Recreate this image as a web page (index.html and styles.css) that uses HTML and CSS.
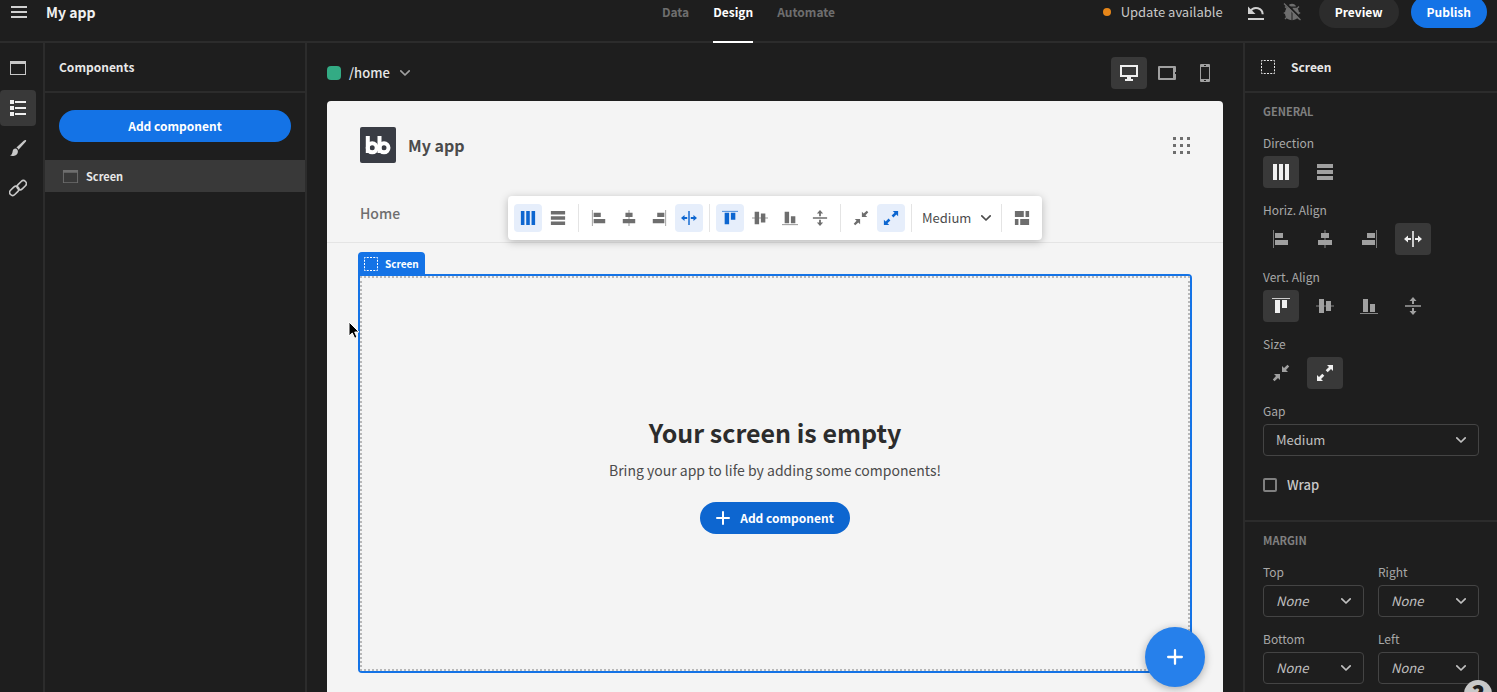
FILE: index.html
```html
<!DOCTYPE html>
<html lang="en">
<head>
    <meta charset="UTF-8">
    <meta name="viewport" content="width=device-width, initial-scale=1.0">
    <title>My app</title>
    <link rel="stylesheet" href="styles.css">
</head>
<body>
    <!-- icon sprite -->
    <svg class="sprite" aria-hidden="true">
        <symbol id="i-menu" viewBox="0 0 18 18"><path d="M1 3h16v2H1zM1 8h16v2H1zM1 13h16v2H1z"/></symbol>
        <symbol id="i-window" viewBox="0 0 18 18"><path d="M1 2h16v14H1zM2 5v10h14V5z" fill-rule="evenodd"/></symbol>
        <symbol id="i-list" viewBox="0 0 18 18"><path d="M1 1h4v4H1zM1 7h4v4H1zM1 13h4v4H1zM6 2h11v2H6zM6 8h11v2H6zM6 14h11v2H6z"/></symbol>
        <symbol id="i-brush" viewBox="0 0 18 18"><path d="M17 1.200c-.5-.5-1.200-.3-2 .3L7.400 8.600c.9.4 1.700 1.200 2.100 2.100l7-7.800c.7-.8.9-1.300.5-1.700zM6.600 9.500c-1.800 0-2.800 1.200-3 2.900-.2 1.900-.9 3.400-2.600 4.200 2.600.8 7.700.5 7.900-4.200-.1-1.500-.9-2.600-2.300-2.900z"/></symbol>
        <symbol id="i-link" viewBox="0 0 18 18"><g fill="none" stroke="currentColor" stroke-width="1.600"><rect x="7.500" y="3.200" width="10.500" height="6" rx="3" transform="rotate(-45 12.700 6.200)"/><rect x="0" y="8.800" width="10.500" height="6" rx="3" transform="rotate(-45 5.300 11.800)"/></g></symbol>
        <symbol id="i-undo" viewBox="0 0 18 18"><path d="M1 15h16v2H1z"/><path d="M3 8.500c2-3 5-4 8-3.200 2.800.8 4.500 3 4.700 5.900" fill="none" stroke="currentColor" stroke-width="2"/><path d="M1 3.500V11h7.500z"/></symbol>
        <symbol id="i-bug" viewBox="0 0 18 18"><path d="M5 3.600C5.500 1.800 7 .8 9 .8s3.500 1 4 2.800zM8.500 4.800v12.400C.5 16.800 1 7.500 4 4.800zM9.500 4.800v12.400c8-.4 7.500-9.700 4.500-12.400z"/><path d="M2 3.500l2 2M16 3.500l-2 2M.8 10h3M17.200 10h-3M2 16l2-2M16 16l-2-2" fill="none" stroke="currentColor" stroke-width="1.300"/><path d="M2.500 0L18 15.500" stroke="#1e1e1e" stroke-width="2"/><path d="M1 .5l16.500 16.500" stroke="currentColor" stroke-width="1.300"/></symbol>
        <symbol id="i-chevron" viewBox="0 0 10 10"><path d="M.8 2.800L5 7l4.200-4.200" fill="none" stroke="currentColor" stroke-width="1.700" stroke-linecap="round" stroke-linejoin="round"/></symbol>
        <symbol id="i-desktop" viewBox="0 0 18 18"><path d="M0 1h18v12h-7v2h2v2H5v-2h2v-2H0zM2 3v8h14V3z" fill-rule="evenodd"/></symbol>
        <symbol id="i-tablet" viewBox="0 0 18 18"><path d="M1 2h16q1 0 1 1v5h-1v2h1v5q0 1-1 1H1q-1 0-1-1V3q0-1 1-1zM2 4v10h13V4z" fill-rule="evenodd"/></symbol>
        <symbol id="i-phone" viewBox="0 0 18 18"><path d="M5 0h8q1 0 1 1v16q0 1-1 1H5q-1 0-1-1V1q0-1 1-1zM5 3v12h8V3zM8 1v1h2V1zM8 16v1h2v-1z" fill-rule="evenodd"/></symbol>
        <symbol id="i-dashed" viewBox="0 0 14 14"><rect x=".5" y=".5" width="13" height="13" fill="none" stroke="currentColor" stroke-dasharray="2 1.250" stroke-dashoffset="1"/></symbol>
        <symbol id="i-cols" viewBox="0 0 18 18"><path d="M1 1h4v16H1zM7 1h4v16H7zM13 1h4v16h-4z"/></symbol>
        <symbol id="i-rows" viewBox="0 0 18 18"><path d="M1 1h16v4H1zM1 7h16v4H1zM1 13h16v4H1z"/></symbol>
        <symbol id="i-left" viewBox="0 0 18 18"><path d="M1 0h1v18H1z" opacity=".7"/><path d="M3 3h8v5H3zM3 10h13v5H3z"/></symbol>
        <symbol id="i-center" viewBox="0 0 18 18"><path d="M8.500 0h1v18h-1z" opacity=".8"/><path d="M5 3h8v5H5zM2 10h14v5H2z"/></symbol>
        <symbol id="i-right" viewBox="0 0 18 18"><path d="M16 0h1v18h-1z" opacity=".7"/><path d="M7 3h8v5H7zM2 10h13v5H2z"/></symbol>
        <symbol id="i-spread-h" viewBox="0 0 18 18"><path d="M8.200 1h1.600v16H8.200zM0 9l4-3.500V8h3v2H4v2.500zM18 9l-4-3.500V8h-3v2h3v2.500z"/></symbol>
        <symbol id="i-top" viewBox="0 0 18 18"><path d="M0 1h18v1H0z" opacity=".8"/><path d="M3 3h5v13H3zM10 3h5v8h-5z"/></symbol>
        <symbol id="i-middle" viewBox="0 0 18 18"><path d="M0 8.500h18v1H0z" opacity=".8"/><path d="M3 2h5v14H3zM10 4h5v10h-5z"/></symbol>
        <symbol id="i-bottom" viewBox="0 0 18 18"><path d="M0 16h18v1H0z" opacity=".8"/><path d="M3 2h5v13H3zM10 7h5v8h-5z"/></symbol>
        <symbol id="i-spread-v" viewBox="0 0 18 18"><path d="M1 8.200h16v1.600H1zM9 0L5.500 4H8v3h2V4h2.500zM9 18l-3.500-4H8v-3h2v3h2.500z"/></symbol>
        <symbol id="i-shrink" viewBox="0 0 18 18"><path d="M10 8V2l2 2 3.500-3.200 1.700 1.700L14 6l2 2zM8 10v6l-2-2-3.500 3.200L.8 15.500 4 12l-2-2z"/></symbol>
        <symbol id="i-grow" viewBox="0 0 18 18"><path d="M17 1v6l-2-2-3.300 3.300-2-2L13 3l-2-2zM1 17v-6l2 2 3.300-3.300 2 2L5 15l2 2z"/></symbol>
        <symbol id="i-blocks" viewBox="0 0 18 18"><path d="M1 1h10v7H1zM13 1h4v7h-4zM1 10h4v7H1zM7 10h10v7H7z"/></symbol>
        <symbol id="i-plus" viewBox="0 0 14 14"><path d="M7 1v12M1 7h12" stroke="currentColor" stroke-width="2" stroke-linecap="round"/></symbol>
        <symbol id="i-grid" viewBox="0 0 18 18"><path d="M1 1h3v3H1zM8 1h3v3H8zM15 1h3v3h-3zM1 8h3v3H1zM8 8h3v3H8zM15 8h3v3h-3zM1 15h3v3H1zM8 15h3v3H8zM15 15h3v3h-3z"/></symbol>
    </svg>

    <header class="topbar">
        <div class="topbar-left">
            <button class="plain" aria-label="Menu"><svg class="icon"><use href="#i-menu"/></svg></button>
            <h1 class="app-name">My app</h1>
        </div>
        <nav class="tabs">
            <a href="#data">Data</a>
            <a href="#design" class="active">Design</a>
            <a href="#automate">Automate</a>
        </nav>
        <div class="topbar-right">
            <a href="#update" class="update"><span class="dot"></span>Update available</a>
            <button class="plain undo" aria-label="Undo"><svg class="icon"><use href="#i-undo"/></svg></button>
            <button class="plain bug" aria-label="Debug"><svg class="icon"><use href="#i-bug"/></svg></button>
            <button class="pill secondary">Preview</button>
            <button class="pill cta">Publish</button>
        </div>
    </header>

    <div class="workspace">
        <nav class="rail">
            <button aria-label="Screens"><svg class="icon"><use href="#i-window"/></svg></button>
            <button class="active" aria-label="Components"><svg class="icon"><use href="#i-list"/></svg></button>
            <button aria-label="Theme"><svg class="icon"><use href="#i-brush"/></svg></button>
            <button aria-label="Navigation"><svg class="icon"><use href="#i-link"/></svg></button>
        </nav>

        <aside class="panel components">
            <h2 class="panel-title">Components</h2>
            <button class="pill cta add">Add component</button>
            <a href="#screen" class="tree-item"><svg class="icon"><use href="#i-window"/></svg>Screen</a>
        </aside>

        <main class="stage">
            <div class="stage-bar">
                <button class="plain route"><span class="swatch"></span>/home<svg class="chevron"><use href="#i-chevron"/></svg></button>
                <div class="devices">
                    <button class="tool active" aria-label="Desktop"><svg class="icon"><use href="#i-desktop"/></svg></button>
                    <button class="tool" aria-label="Tablet"><svg class="icon"><use href="#i-tablet"/></svg></button>
                    <button class="tool" aria-label="Mobile"><svg class="icon"><use href="#i-phone"/></svg></button>
                </div>
            </div>

            <div class="canvas">
                <div class="site-head">
                    <svg class="logo" viewBox="0 0 36 36">
                        <rect width="36" height="36" rx="2" fill="#393c44"/>
                        <g fill="none" stroke="#fff" stroke-width="4">
                            <circle cx="12.200" cy="20.800" r="4.500"/>
                            <circle cx="24" cy="20.800" r="4.500"/>
                            <path d="M7.800 9v17M19.500 9v17"/>
                        </g>
                    </svg>
                    <span class="site-name">My app</span>
                    <svg class="icon grid"><use href="#i-grid"/></svg>
                </div>
                <nav class="site-nav"><a href="#home">Home</a></nav>

                <div class="site-body">
                    <section class="screen">
                        <div class="screen-tag"><svg><use href="#i-dashed"/></svg>Screen</div>
                        <div class="empty">
                            <h2>Your screen is empty</h2>
                            <p>Bring your app to life by adding some components!</p>
                            <button class="pill"><svg><use href="#i-plus"/></svg>Add component</button>
                        </div>
                    </section>
                </div>

                <div class="float-bar">
                    <div class="group">
                        <button class="active" aria-label="Columns"><svg><use href="#i-cols"/></svg></button>
                        <button aria-label="Rows"><svg><use href="#i-rows"/></svg></button>
                    </div>
                    <div class="group">
                        <button aria-label="Align left"><svg><use href="#i-left"/></svg></button>
                        <button aria-label="Align center"><svg><use href="#i-center"/></svg></button>
                        <button aria-label="Align right"><svg><use href="#i-right"/></svg></button>
                        <button class="active" aria-label="Stretch"><svg><use href="#i-spread-h"/></svg></button>
                    </div>
                    <div class="group">
                        <button class="active" aria-label="Align top"><svg><use href="#i-top"/></svg></button>
                        <button aria-label="Align middle"><svg><use href="#i-middle"/></svg></button>
                        <button aria-label="Align bottom"><svg><use href="#i-bottom"/></svg></button>
                        <button aria-label="Stretch vertically"><svg><use href="#i-spread-v"/></svg></button>
                    </div>
                    <div class="group">
                        <button aria-label="Shrink"><svg><use href="#i-shrink"/></svg></button>
                        <button class="active" aria-label="Grow"><svg><use href="#i-grow"/></svg></button>
                    </div>
                    <div class="group">
                        <div class="select small">
                            <select aria-label="Gap"><option>Medium</option></select>
                            <svg class="chevron"><use href="#i-chevron"/></svg>
                        </div>
                    </div>
                    <div class="group">
                        <button aria-label="Wrap in block"><svg><use href="#i-blocks"/></svg></button>
                    </div>
                </div>

                <button class="fab" aria-label="Add"><svg><use href="#i-plus"/></svg></button>
                <svg class="cursor" viewBox="0 0 12 19"><path d="M1 1v14l3.300-3 2.400 5.300 2.300-1L6.700 11H11z" fill="#000" stroke="#fff"/></svg>
            </div>
        </main>

        <aside class="panel settings">
            <h2 class="panel-title"><svg class="dashed"><use href="#i-dashed"/></svg>Screen</h2>
            <section class="section">
                <h3>GENERAL</h3>
                <div class="field">
                    <span class="label">Direction</span>
                    <div class="tools">
                        <button class="tool active" aria-label="Column"><svg class="icon"><use href="#i-cols"/></svg></button>
                        <button class="tool" aria-label="Row"><svg class="icon"><use href="#i-rows"/></svg></button>
                    </div>
                </div>
                <div class="field">
                    <span class="label">Horiz. Align</span>
                    <div class="tools">
                        <button class="tool" aria-label="Left"><svg class="icon"><use href="#i-left"/></svg></button>
                        <button class="tool" aria-label="Center"><svg class="icon"><use href="#i-center"/></svg></button>
                        <button class="tool" aria-label="Right"><svg class="icon"><use href="#i-right"/></svg></button>
                        <button class="tool active" aria-label="Stretch"><svg class="icon"><use href="#i-spread-h"/></svg></button>
                    </div>
                </div>
                <div class="field">
                    <span class="label">Vert. Align</span>
                    <div class="tools">
                        <button class="tool active" aria-label="Top"><svg class="icon"><use href="#i-top"/></svg></button>
                        <button class="tool" aria-label="Middle"><svg class="icon"><use href="#i-middle"/></svg></button>
                        <button class="tool" aria-label="Bottom"><svg class="icon"><use href="#i-bottom"/></svg></button>
                        <button class="tool" aria-label="Stretch"><svg class="icon"><use href="#i-spread-v"/></svg></button>
                    </div>
                </div>
                <div class="field">
                    <span class="label">Size</span>
                    <div class="tools">
                        <button class="tool" aria-label="Shrink"><svg class="icon"><use href="#i-shrink"/></svg></button>
                        <button class="tool active" aria-label="Grow"><svg class="icon"><use href="#i-grow"/></svg></button>
                    </div>
                </div>
                <div class="field">
                    <label class="label" for="gap">Gap</label>
                    <div class="select">
                        <select id="gap"><option>Medium</option></select>
                        <svg class="chevron"><use href="#i-chevron"/></svg>
                    </div>
                </div>
                <label class="check"><input type="checkbox">Wrap</label>
            </section>
            <section class="section">
                <h3>MARGIN</h3>
                <div class="pair">
                    <div class="field">
                        <label class="label" for="m-top">Top</label>
                        <div class="select none">
                            <select id="m-top"><option>None</option></select>
                            <svg class="chevron"><use href="#i-chevron"/></svg>
                        </div>
                    </div>
                    <div class="field">
                        <label class="label" for="m-right">Right</label>
                        <div class="select none">
                            <select id="m-right"><option>None</option></select>
                            <svg class="chevron"><use href="#i-chevron"/></svg>
                        </div>
                    </div>
                    <div class="field">
                        <label class="label" for="m-bottom">Bottom</label>
                        <div class="select none">
                            <select id="m-bottom"><option>None</option></select>
                            <svg class="chevron"><use href="#i-chevron"/></svg>
                        </div>
                    </div>
                    <div class="field">
                        <label class="label" for="m-left">Left</label>
                        <div class="select none">
                            <select id="m-left"><option>None</option></select>
                            <svg class="chevron"><use href="#i-chevron"/></svg>
                        </div>
                    </div>
                </div>
            </section>
        </aside>
    </div>

    <button class="help" aria-label="Help">?</button>
</body>
</html>
```
FILE: styles.css
```css
* {
    box-sizing: border-box;
}
body {
    margin: 0;
    height: 100vh;
    display: flex;
    flex-direction: column;
    overflow: hidden;
    background: #1e1e1e;
    color: #e8e8e8;
    font-family: "Noto Sans CJK SC", "Noto Sans", sans-serif;
    font-size: 13px;
    line-height: 20px;
}
h1, h2, h3, p {
    margin: 0;
}
a {
    color: inherit;
    text-decoration: none;
}
button, select {
    font: inherit;
    color: inherit;
    border: 0;
    padding: 0;
    background: none;
}
svg {
    display: block;
    fill: currentColor;
    flex: none;
}
.sprite {
    position: absolute;
    width: 0;
    height: 0;
}
.icon {
    width: 18px;
    height: 18px;
}
.chevron {
    width: 10px;
    height: 10px;
}
.plain {
    display: flex;
    align-items: center;
}
.pill {
    height: 32px;
    padding: 0 16px;
    border-radius: 16px;
    font-size: 12px;
    font-weight: bold;
    color: #fff;
}
.cta {
    background: #1473e6;
}
.secondary {
    background: #2c2c2c;
}

.topbar {
    flex: none;
    height: 62px;
    margin-top: -19px;
    padding: 0 10px;
    display: grid;
    grid-template-columns: 1fr auto 1fr;
    border-bottom: 2px solid #2c2c2c;
}
.topbar-left, .topbar-right {
    display: flex;
    align-items: center;
}
.topbar-left {
    gap: 18px;
    color: #d0d0d0;
}
.app-name {
    font-size: 14px;
    color: #f0f0f0;
}
.tabs {
    display: flex;
    gap: 24px;
    font-size: 12px;
    line-height: 61px;
    font-weight: bold;
    color: #6e6e6e;
}
.tabs a {
    height: 62px;
}
.tabs .active {
    color: #fff;
    border-bottom: 2px solid #fff;
}
.topbar-right {
    justify-content: flex-end;
}
.update {
    display: flex;
    align-items: center;
    gap: 10px;
    color: #c8c8c8;
}
.dot {
    width: 8px;
    height: 8px;
    border-radius: 50%;
    background: #e68619;
}
.undo {
    margin: 0 18px 0 24px;
    color: #d0d0d0;
}
.bug {
    color: #6e6e6e;
    margin-right: 18px;
}
.topbar .cta {
    margin-left: 12px;
}

.workspace {
    flex: 1;
    min-height: 0;
    display: flex;
}
.rail {
    width: 45px;
    padding-top: 7px;
    display: flex;
    flex-direction: column;
    gap: 4px;
    border-right: 2px solid #2c2c2c;
    color: #c8c8c8;
}
.rail button {
    width: 36px;
    height: 36px;
    border-radius: 4px;
    display: grid;
    place-items: center;
}
.rail .active {
    background: #393939;
    color: #f0f0f0;
}
.panel-title {
    display: flex;
    align-items: center;
    gap: 16px;
    height: 50px;
    padding: 0 14px;
    border-bottom: 2px solid #2c2c2c;
    font-size: 12px;
}
.components {
    width: 262px;
    display: flex;
    flex-direction: column;
    border-right: 2px solid #2c2c2c;
}
.add {
    margin: 17px 14px 18px;
}
.tree-item {
    display: flex;
    align-items: center;
    gap: 7px;
    height: 32px;
    padding: 0 17px;
    background: #393939;
    font-size: 11px;
    font-weight: bold;
}
.tree-item .icon {
    width: 17px;
    height: 17px;
    color: #6e6e6e;
}

.stage {
    flex: 1;
    min-width: 0;
    padding: 0 20px;
    display: flex;
    flex-direction: column;
}
.stage-bar {
    height: 58px;
    padding-top: 2px;
    display: flex;
    justify-content: space-between;
    align-items: center;
}
.route {
    gap: 8px;
    font-weight: 500;
}
.route .chevron {
    margin-left: 2px;
    color: #a0a0a0;
}
.swatch {
    width: 14px;
    height: 14px;
    border-radius: 4px;
    background: #33ab84;
}
.devices {
    display: flex;
    gap: 2px;
}
.tool {
    width: 36px;
    height: 32px;
    border-radius: 4px;
    display: grid;
    place-items: center;
    color: #a0a0a0;
}
.tool.active {
    background: #393939;
    color: #f0f0f0;
}

.canvas {
    position: relative;
    flex: 1;
    display: flex;
    flex-direction: column;
    border-radius: 4px 4px 0 0;
    background: #f4f4f4;
    color: #4b4b4b;
}
.site-head {
    display: flex;
    align-items: center;
    gap: 12px;
    padding: 26px 33px 0;
}
.logo {
    width: 36px;
    height: 36px;
}
.site-name {
    font-size: 16px;
    font-weight: bold;
}
.grid {
    margin-left: auto;
    color: #6e6e6e;
}
.site-nav {
    padding: 38px 33px 17px;
    border-bottom: 1px solid #e4e4e4;
    font-size: 14px;
    line-height: 24px;
    font-weight: 500;
    color: #6e6e6e;
}
.site-body {
    flex: 1;
    display: flex;
    padding: 31px 31px 19px;
}
.screen {
    position: relative;
    flex: 1;
    display: flex;
    border: 2px solid #1473e6;
    border-radius: 0 4px 4px 4px;
}
.screen-tag {
    position: absolute;
    left: -2px;
    bottom: 100%;
    height: 24px;
    padding: 0 6px;
    display: flex;
    align-items: center;
    gap: 7px;
    border-radius: 4px 4px 0 0;
    background: #1473e6;
    color: #fff;
    font-size: 10px;
    font-weight: bold;
}
.screen-tag svg, .dashed {
    width: 14px;
    height: 14px;
}
.empty {
    flex: 1;
    display: flex;
    flex-direction: column;
    align-items: center;
    justify-content: center;
    border: 2px dotted #b8b8b8;
}
.empty h2 {
    font-size: 25px;
    line-height: 36px;
    color: #2c2c2c;
}
.empty p {
    margin: 8px 0 20px;
    font-size: 14px;
    line-height: 24px;
}
.empty .pill {
    display: flex;
    align-items: center;
    gap: 10px;
    background: #0d66d0;
}
.empty .pill svg {
    width: 14px;
    height: 14px;
}

.float-bar {
    position: absolute;
    top: 95px;
    left: 50%;
    transform: translateX(-50%);
    display: flex;
    padding: 8px 6px;
    border-radius: 4px;
    background: #fff;
    box-shadow: 0 2px 8px rgba(0, 0, 0, 0.25);
    color: #6e6e6e;
}
.group {
    display: flex;
    gap: 2px;
}
.group + .group {
    margin-left: 6px;
    padding-left: 6px;
    border-left: 1px solid #e4e4e4;
}
.group button {
    width: 28px;
    height: 28px;
    border-radius: 4px;
    display: grid;
    place-items: center;
}
.group button svg {
    width: 16px;
    height: 16px;
}
.group .active {
    background: #e6eefb;
    color: #0d66d0;
}
.fab {
    position: absolute;
    right: 18px;
    bottom: 5px;
    width: 60px;
    height: 60px;
    border-radius: 50%;
    display: grid;
    place-items: center;
    background: #2680eb;
    color: #fff;
    box-shadow: 0 2px 8px rgba(0, 0, 0, 0.3);
}
.fab svg {
    width: 16px;
    height: 16px;
}
.cursor {
    position: absolute;
    left: 21px;
    top: 220px;
    width: 12px;
    height: 19px;
}

.settings {
    width: 254px;
    border-left: 2px solid #2c2c2c;
}
.settings .panel-title {
    padding: 0 16px;
}
.section {
    padding: 8px 18px 18px;
    display: flex;
    flex-direction: column;
    gap: 12px;
    border-bottom: 2px solid #2c2c2c;
}
.section h3 {
    font-size: 11px;
    color: #808080;
}
.field {
    display: flex;
    flex-direction: column;
    gap: 3px;
}
.label {
    font-size: 12px;
    color: #a8a8a8;
}
.tools {
    display: flex;
    gap: 8px;
}
.select {
    display: grid;
    align-items: center;
    color: #c0c0c0;
}
.select select, .select .chevron {
    grid-area: 1 / 1;
}
.select select {
    appearance: none;
    width: 100%;
    height: 32px;
    padding: 0 12px;
    border: 1px solid #444;
    border-radius: 4px;
}
.select .chevron {
    justify-self: end;
    margin-right: 13px;
    pointer-events: none;
}
.none select {
    font-style: italic;
}
.select.small {
    width: 77px;
    color: #4b4b4b;
}
.small select {
    height: 28px;
    padding: 0 4px;
    border: 0;
}
.small .chevron {
    margin-right: 4px;
}
.check {
    display: flex;
    align-items: center;
    gap: 10px;
    height: 34px;
    font-weight: 500;
    color: #c8c8c8;
}
.check input {
    appearance: none;
    margin: 0;
    width: 14px;
    height: 14px;
    border: 2px solid #808080;
    border-radius: 2px;
}
.pair {
    display: grid;
    grid-template-columns: 1fr 1fr;
    gap: 12px 14px;
}
.help {
    position: absolute;
    right: 5px;
    bottom: -16px;
    width: 28px;
    height: 28px;
    border-radius: 50%;
    background: #c8c8c8;
    color: #1e1e1e;
    font-size: 24px;
    font-weight: 900;
}
```
